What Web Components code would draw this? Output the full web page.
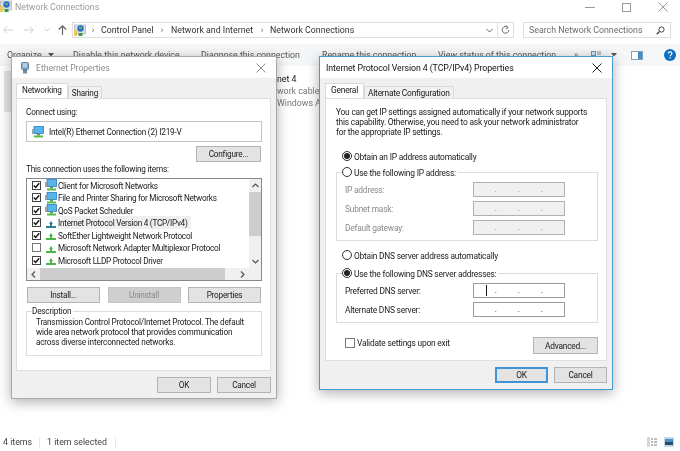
<!DOCTYPE html>
<html><head><meta charset="utf-8"><title>Network Connections</title>
<style>
html,body{margin:0;padding:0;background:#fff}
body{width:680px;height:451px;overflow:hidden;position:relative;font:8.8px/12px Roboto,"Liberation Sans",sans-serif;color:#1a1a1a;filter:blur(.25px)}
nc-dialog.a{left:11px;top:56px;width:266px;height:343px;font-size:8.2px;letter-spacing:-.2px;--hfs:8.6px}
nc-dialog.b{left:319px;top:56px;width:294px;height:334px;--ml:5px;font-size:8.4px;letter-spacing:-.21px;--hfs:8.8px}
</style></head><body>
<nc-explorer></nc-explorer>

<nc-dialog class="a" heading="Ethernet Properties" icon="1" inactive>
  <nc-tab slot="tabs" active>Networking</nc-tab>
  <nc-tab slot="tabs">Sharing</nc-tab>
  <nc-eth-panel></nc-eth-panel>
  <nc-btn slot="foot" w="54">OK</nc-btn>
  <nc-btn slot="foot" w="54">Cancel</nc-btn>
</nc-dialog>

<nc-dialog class="b" heading="Internet Protocol Version 4 (TCP/IPv4) Properties">
  <nc-tab slot="tabs" active>General</nc-tab>
  <nc-tab slot="tabs">Alternate Configuration</nc-tab>
  <nc-ip-panel></nc-ip-panel>
  <nc-btn slot="foot" w="53" default>OK</nc-btn>
  <nc-btn slot="foot" w="53">Cancel</nc-btn>
</nc-dialog>

<script>
const netIcon = `<svg width="12" height="12" viewBox="0 0 12 12"><rect x="2" y="0.5" width="9.5" height="7" fill="#5ab4ec" stroke="#2a7fc0" stroke-width=".8"/><rect x="5" y="7.5" width="3" height="2" fill="#5a9a5a"/><rect x="2" y="9.5" width="9" height="2" fill="#58b848"/><rect x="0" y="3" width="2" height="5" fill="#9aa4ac"/></svg>`;
const protoIcon = c => `<svg width="12" height="12" viewBox="0 0 12 12"><path d="M6 4 8 7H7v2h4v2H1V9h4V7H4z" fill="${c}"/></svg>`;
const globeIcon = `<svg width="12" height="13" viewBox="0 0 12 13" style="flex:none"><rect x="0.5" y="1" width="11" height="9" fill="#d8dde6" stroke="#9aa3b0" stroke-width=".6"/><rect x="0" y="6" width="3" height="6" fill="#e8c860"/><circle cx="6.5" cy="4.5" r="3.2" fill="#2f6fc4"/><path d="M5 3h3v2H5z" fill="#58b848"/><rect x="4.5" y="9" width="4" height="3" fill="#3d9a48"/></svg>`;

function def(name, html, extra){
  const t = document.createElement('template'); t.innerHTML = html;
  customElements.define(name, class extends HTMLElement{
    constructor(){ super(); this.attachShadow({mode:'open'}).appendChild(t.content.cloneNode(true)); }
    connectedCallback(){ extra && extra(this, this.shadowRoot); }
  });
}

def('nc-btn', `<style>
:host{display:inline-flex;box-sizing:border-box;height:16px;align-items:center;justify-content:center;background:#e3e3e3;border:1px solid #b4b4b4;color:#1a1a1a}
:host([disabled]){background:#cfcfcf;border-color:#c4c4c4;color:#8a8a8a}
:host([default]){border:2px solid #3f94d6;background:#e3e3e3}
</style><slot></slot>`, (h)=>{ if(h.getAttribute('w')) h.style.width=h.getAttribute('w')+'px'; });

def('nc-tab', `<style>
:host{display:flex;box-sizing:border-box;height:12px;margin-top:3px;padding:0 3px;align-items:center;background:#f0f0f0;border:1px solid #d9d9d9;border-bottom:0;color:#1a1a1a}
:host([active]){height:15px;margin-top:0;padding:0 5px 2px 5px;background:#fff;border-color:#d9d9d9}
</style><slot></slot>`);

def('nc-dialog', `<style>
:host{display:flex;flex-direction:column;position:absolute;box-sizing:border-box;background:#f0f0f0;border:1px solid #4a9ad6;box-shadow:0 3px 12px rgba(0,0,0,.32)}
:host([inactive]){border-color:#a8a8a8}
header{display:flex;align-items:center;height:21px;background:#fff;padding:0 6px;gap:5px;color:#111;flex:none;font-size:var(--hfs);letter-spacing:-.1px}
:host([inactive]) header{color:#8d8d8d;letter-spacing:0}
header span{flex:1}
header svg.x{margin-right:4px}
.tabs{display:flex;margin:5px 0 0 var(--ml,4px);flex:none;height:15px}
main{flex:none;margin:0 5px 0 var(--ml,4px);background:#fff;border:1px solid #dfdfdf;box-sizing:border-box;height:var(--ph)}
footer{display:flex;justify-content:flex-end;gap:6px;margin:6px 5px 0 0}
</style>
<header><span class="ic"></span><span class="t"></span>
<svg class="x" width="10" height="10" viewBox="0 0 10 10"><path d="M.5.5l9 9M9.5.5l-9 9" stroke="#222" stroke-width="1"/></svg></header>
<div class="tabs"><slot name="tabs"></slot></div>
<main><slot></slot></main>
<footer><slot name="foot"></slot></footer>`, (h,s)=>{
  s.querySelector('.t').textContent = h.getAttribute('heading');
  const ic = s.querySelector('.ic');
  if(h.hasAttribute('icon')){ ic.style.cssText='flex:none;display:flex;margin-left:3px;margin-right:2px';
    ic.innerHTML=`<svg width="8" height="12" viewBox="0 0 8 12"><rect x=".5" y=".5" width="7" height="7" rx="1" fill="#8fb0cc" stroke="#5c7f9c"/><rect x="2" y="8" width="4" height="3.5" fill="#6a8aa6"/><path d="M2 2h4M2 4h4" stroke="#dfe8f0"/></svg>`;
    s.querySelector('svg.x path').setAttribute('stroke','#8a8a8a');
  } else ic.remove();
  s.querySelector('main').style.setProperty('--ph', h.hasAttribute('icon') ? '273px' : '263px');
});

def('nc-check', `<style>
:host{display:inline-flex;align-items:center;flex:none}
.b{box-sizing:border-box;width:9px;height:9px;background:#fff;border:1px solid #444;display:flex}
:host([off]) .b{border-color:#777}
:host([big]) .b{width:10px;height:10px}
svg{display:block}
:host([off]) svg{display:none}
</style><span class="b"><svg width="7" height="7" viewBox="0 0 7 7"><path d="M.8 3.4 2.7 5.4 6.2 1.2" fill="none" stroke="#111" stroke-width="1.4"/></svg></span>`);

def('nc-radio', `<style>
:host{display:inline-flex;align-items:center;height:12px;gap:2px;color:#1a1a1a}
.r{box-sizing:border-box;width:10px;height:10px;border:1px solid #333;border-radius:50%;background:#fff;display:flex;align-items:center;justify-content:center;flex:none}
i{display:none;width:6px;height:6px;border-radius:50%;background:#222}
:host([on]) i{display:block}
.t{padding-top:1px}
</style><span class="r"><i></i></span><span class="t"><slot></slot></span>`);

def('nc-ip', `<style>
:host{display:flex;position:relative;box-sizing:border-box;width:92px;height:15px;background:#fff;border:1px solid #9a9a9a;color:#222;line-height:13px;letter-spacing:0}
:host([off]){background:#f0f0f0;border-color:#b0b0b0;color:#777}
span{width:23px;text-align:right;flex:none}
i{display:none;position:absolute;left:12px;top:1px;width:1px;height:11px;background:#111}
:host([caret]) i{display:block}
</style><span>.</span><span>.</span><span>.</span><i></i>`);

def('nc-group', `<style>
:host{display:block}
fieldset{margin:0;padding:0;border:1px solid #dcdcdc;min-width:0}
legend{padding:0 2px 0 0;margin-left:5px;height:12px;line-height:12px;display:block}
</style><fieldset><legend><slot name="legend"></slot></legend><slot></slot></fieldset>`);

def('nc-row', `<style>
:host{display:flex;align-items:center;height:12.5px;padding-left:5px;white-space:nowrap;letter-spacing:-.26px}
.i{display:flex;width:12px;height:12px;margin:0 1px 0 4px;flex:none}
.t{padding:1px 3px 0 0}
:host([sel]) .t{background:#efefef}
</style><nc-check></nc-check><span class="i"></span><span class="t"><slot></slot></span>`, (h,s)=>{
  const k=h.getAttribute('k');
  s.querySelector('.i').innerHTML = k==='n'?netIcon : protoIcon(k==='s'?'#2a7f9a':'#4ab848');
  if(h.hasAttribute('off')) s.querySelector('nc-check').setAttribute('off','');
});

def('nc-list', `<style>
:host{display:grid;box-sizing:border-box;height:103px;margin-top:3px;border:1px solid #828790;grid-template-columns:1fr 12px;grid-template-rows:89px 12px;background:#fff}
.rows{overflow:hidden}
.v,.h,.c{background:#f0f0f0}
.v{display:flex;flex-direction:column;align-items:center;position:relative}
.a{height:13px;display:flex;align-items:center;justify-content:center;flex:none;width:12px}
.thumb{background:#cdcdcd;width:12px;height:44px}
.sp{flex:1}
.h{display:flex;align-items:center}
.a2{width:13px;height:12px;display:flex;align-items:center;justify-content:center;flex:none}
.ht{height:12px;width:185px;background:#cdcdcd}
</style>
<div class="rows"><slot></slot></div>
<div class="v"><span class="a"><svg width="7" height="5" viewBox="0 0 7 5"><path d="M.5 4 3.500 1 6.500 4" fill="none" stroke="#555" stroke-width="1.200"/></svg></span><div class="thumb"></div><div class="sp"></div><span class="a"><svg width="7" height="5" viewBox="0 0 7 5"><path d="M.5 1 3.500 4 6.500 1" fill="none" stroke="#555" stroke-width="1.200"/></svg></span></div>
<div class="h"><span class="a2"><svg width="5" height="7" viewBox="0 0 5 7"><path d="M4 .5 1 3.500 4 6.500" fill="none" stroke="#555" stroke-width="1.200"/></svg></span><div class="ht"></div><div style="flex:1"></div><span class="a2"><svg width="5" height="7" viewBox="0 0 5 7"><path d="M1 .5 4 3.500 1 6.500" fill="none" stroke="#555" stroke-width="1.200"/></svg></span></div>
<div class="c"></div>`);

def('nc-eth-panel', `<style>
:host{display:flex;flex-direction:column;padding:7px 8px 0 9px;box-sizing:border-box;height:100%}
.l{height:12px;line-height:13px}
.box{box-sizing:border-box;height:21px;margin-top:3px;border:1px solid #c4c4c4;display:flex;align-items:center;padding-left:5px;gap:5px}
.cfg{display:flex;justify-content:flex-end;margin:4px 1px 0 0}
.btns{display:flex;justify-content:space-between;margin:6px 1px 0 1px}
nc-group{margin-top:2px}
.d{padding:1px 0 6px 9px;height:31px;line-height:9.8px;white-space:nowrap;box-sizing:content-box}
</style>
<div class="l">Connect using:</div>
<div class="box"><span style="display:flex">${netIcon}</span><span>Intel(R) Ethernet Connection (2) I219-V</span></div>
<div class="cfg"><nc-btn w="65">Configure...</nc-btn></div>
<div class="l" style="margin-top:1px">This connection uses the following items:</div>
<nc-list>
<nc-row k="n">Client for Microsoft Networks</nc-row>
<nc-row k="n">File and Printer Sharing for Microsoft Networks</nc-row>
<nc-row k="n">QoS Packet Scheduler</nc-row>
<nc-row k="s" sel>Internet Protocol Version 4 (TCP/IPv4)</nc-row>
<nc-row k="p">SoftEther Lightweight Network Protocol</nc-row>
<nc-row k="p" off>Microsoft Network Adapter Multiplexor Protocol</nc-row>
<nc-row k="p">Microsoft LLDP Protocol Driver</nc-row>
</nc-list>
<div class="btns"><nc-btn w="73">Install...</nc-btn><nc-btn w="73" disabled>Uninstall</nc-btn><nc-btn w="73">Properties</nc-btn></div>
<nc-group><span slot="legend">Description</span>
<div class="d">Transmission Control Protocol/Internet Protocol. The default<br>wide area network protocol that provides communication<br>across diverse interconnected networks.</div></nc-group>`);

def('nc-ip-panel', `<style>
:host{display:flex;flex-direction:column;padding:8px 8px 0 10px;box-sizing:border-box;height:100%}
.p{height:29px;line-height:10px;white-space:nowrap}
.r{margin:14px 0 0 6px}
.f{display:grid;grid-template-columns:128px 92px;row-gap:4px;padding:4px 0 5px 8px;align-items:center}
.f>span{padding-top:1px}
.off{color:#8a8a8a}
.v{display:flex;align-items:flex-start;justify-content:space-between;margin-top:14px}
.cb{display:flex;align-items:center;gap:2px;margin-left:9px;height:11px}
</style>
<div class="p">You can get IP settings assigned automatically if your network supports<br>this capability. Otherwise, you need to ask your network administrator<br>for the appropriate IP settings.</div>
<div class="r"><nc-radio on>Obtain an IP address automatically</nc-radio></div>
<nc-group style="margin-top:4px"><nc-radio slot="legend">Use the following IP address:</nc-radio>
<div class="f off"><span>IP address:</span><nc-ip off></nc-ip><span>Subnet mask:</span><nc-ip off></nc-ip><span>Default gateway:</span><nc-ip off></nc-ip></div></nc-group>
<div class="r" style="margin-top:8px"><nc-radio>Obtain DNS server address automatically</nc-radio></div>
<nc-group style="margin-top:4px"><nc-radio slot="legend" on>Use the following DNS server addresses:</nc-radio>
<div class="f"><span>Preferred DNS server:</span><nc-ip caret></nc-ip><span>Alternate DNS server:</span><nc-ip></nc-ip></div></nc-group>
<div class="v"><div class="cb"><nc-check big off></nc-check><span>Validate settings upon exit</span></div><nc-btn w="65" style="height:17px">Advanced...</nc-btn></div>`);

def('nc-explorer', `<style>
:host{display:flex;flex-direction:column;height:451px;background:#fff;color:#333}
.title{display:flex;align-items:center;height:14px;color:#9a9a9a;gap:3px}
.sp{flex:1}
.wc{display:flex;align-items:center;width:33.500px;justify-content:center}
.nav{display:flex;align-items:center;height:16px;margin-top:8px;color:#333;white-space:nowrap}
.addr{box-sizing:border-box;width:442px;height:16px;border:1px solid #dedede;display:flex;align-items:center;padding-left:1px}
.addr b{font-weight:400;color:#666;width:14px;text-align:center;flex:none}
.addr span{flex:none}
.search{box-sizing:border-box;width:148px;height:16px;margin-left:9px;border:1px solid #dedede;display:flex;align-items:center;padding:0 5px;color:#6d6d6d;justify-content:space-between}
.tool{display:flex;align-items:center;height:22px;margin-top:6px;background:#f5f6f7;color:#555;white-space:nowrap}
.tool span{display:block;flex:none}
.content{flex:1;display:flex;position:relative;padding-top:5px}
.selitem{width:7px;height:41px;margin-left:4px;background:#e6e6e6}
.item{margin-left:266px;line-height:12px;color:#777;white-space:nowrap;padding-top:2px}
.item div:first-child{color:#222}
.status{display:flex;align-items:center;box-sizing:border-box;height:20px;padding:2px 0 0 3px;color:#444;white-space:nowrap}
.status .s{width:1px;height:11px;background:#e6e6e6;margin:0 7px}
</style>
<div class="title">${globeIcon.replace('style="flex:none"','style="flex:none;margin-top:-1px"')}<span>Network Connections</span><div class="sp"></div>
<span class="wc"><svg width="10" height="1"><rect width="10" height="1" fill="#999"/></svg></span>
<span class="wc"><svg width="9" height="9" viewBox="0 0 9 9"><rect x=".5" y=".5" width="8" height="8" fill="none" stroke="#999"/></svg></span>
<span class="wc" style="margin-right:.5px"><svg width="10" height="10" viewBox="0 0 10 10"><path d="M.5.5l9 9M9.500.5l-9 9" stroke="#999"/></svg></span></div>
<div class="nav">
<span style="display:flex;width:72px;align-items:center;flex:none">
<svg width="10" height="8" viewBox="0 0 10 8" style="margin-left:3px"><path d="M4 .5.800 4 4 7.500M1 4h9" fill="none" stroke="#cfcfcf"/></svg>
<svg width="10" height="8" viewBox="0 0 10 8" style="margin-left:11px"><path d="M6 .5 9.200 4 6 7.500M9 4H0" fill="none" stroke="#cfcfcf"/></svg>
<svg width="6" height="4" viewBox="0 0 6 4" style="margin-left:10px"><path d="M.5.5 3 3 5.500.5" fill="none" stroke="#cfcfcf"/></svg>
<svg width="9" height="10" viewBox="0 0 9 10" style="margin-left:8px"><path d="M.8 4.500 4.500.8 8.200 4.500M4.500 1v9" fill="none" stroke="#666" stroke-width="1.200"/></svg></span>
<div class="addr">${globeIcon}<b>&#8250;</b><span style="width:54px;padding-left:1px">Control Panel</span><b>&#8250;</b><span style="width:84px;padding-left:2px">Network and Internet</span><b>&#8250;</b><span style="padding-left:1px">Network Connections</span><div class="sp"></div>
<svg width="7" height="5" viewBox="0 0 7 5" style="margin-right:4px"><path d="M.5 1 3.500 4 6.500 1" fill="none" stroke="#666"/></svg><span style="width:1px;height:14px;background:#dedede"></span>
<svg width="9" height="10" viewBox="0 0 9 10" style="margin:0 3px 0 3px"><path d="M6.800 2.500A3.300 3.300 0 1 0 7.800 5M5 .5l2 2-2 1.500" fill="none" stroke="#666"/></svg></div>
<div class="search"><span>Search Network Connections</span><svg width="9" height="9" viewBox="0 0 9 9"><circle cx="5.500" cy="3.500" r="2.600" fill="none" stroke="#444"/><path d="M3.500 5.500.8 8.200" stroke="#444" stroke-width="1.300"/></svg></div>
</div>
<div class="tool">
<span style="margin-left:7px;width:41px">Organize</span><span style="width:25px"><svg width="6" height="4" viewBox="0 0 6 4" style="display:block"><path d="M0 0h6L3 3.500z" fill="#555"/></svg></span>
<span style="width:128px">Disable this network device</span>
<span style="width:121px">Diagnose this connection</span>
<span style="width:116px">Rename this connection</span>
<span style="width:136px">View status of this connection</span>
<span style="width:17px">&#187;</span>
<span style="width:20px"><svg width="11" height="9" viewBox="0 0 11 9" style="display:block"><rect x=".5" y=".5" width="4" height="4" fill="#cfe3f4" stroke="#6a94b8"/><path d="M6 1h4M6 3h4" stroke="#888"/></svg></span>
<span style="width:20px"><svg width="6" height="4" viewBox="0 0 6 4" style="display:block"><path d="M0 0h6L3 3.500z" fill="#555"/></svg></span>
<span style="width:33px"><svg width="12" height="9" viewBox="0 0 12 9" style="display:block"><rect x=".5" y=".5" width="11" height="8" fill="#fff" stroke="#8aa0b4"/><rect x="7" y="1" width="4" height="7" fill="#3f8fd0"/></svg></span>
<span><svg width="12" height="12" viewBox="0 0 12 12" style="display:block"><circle cx="6" cy="6" r="6" fill="#0b6fc4"/><path d="M4.200 4.500C4.300 3.400 5 2.800 6 2.800s1.900.6 1.900 1.600c0 1.400-1.800 1.500-1.800 2.900M6.100 8.200v1.200" fill="none" stroke="#fff" stroke-width="1.200"/></svg></span>
</div>
<div class="content"><div class="selitem"></div><div class="item"><div>net 4</div><div>work cable u</div><div>Windows A</div></div></div>
<div class="status"><span>4 items</span><span class="s"></span><span>1 item selected</span><span class="s" style="margin-left:8px"></span><div class="sp"></div>
<svg width="10" height="10" viewBox="0 0 10 10"><rect x="0" y="0" width="3" height="10" fill="#d8d8c8"/><path d="M4 2h2M7 2h3M4 5h2M7 5h3M4 8h2M7 8h3" stroke="#777"/></svg>
<svg width="10" height="10" viewBox="0 0 10 10" style="margin:0 6px 0 7px"><rect width="10" height="10" fill="#c4d8e8"/><rect x="1" y="2" width="8" height="3" fill="#4a90c8"/><rect x="1" y="5" width="8" height="3" fill="#2a4a6a"/></svg>
</div>`);
</script>
</body></html>
